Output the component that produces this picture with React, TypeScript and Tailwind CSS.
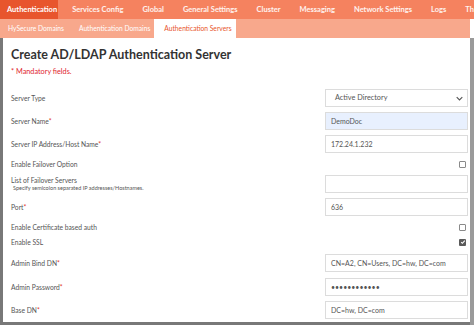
import React from 'react';

const topTabs = ['Services Config', 'Global', 'General Settings', 'Cluster', 'Messaging', 'Network Settings', 'Logs', 'Th'];
const subTabs = ['HySecure Domains', 'Authentication Domains'];

const Req: React.FC = () => <span className="text-[#e2342b]">*</span>;

const TextBox: React.FC<{ value?: string; filled?: boolean }> = ({ value = '', filled }) => (
    <div className={`h-full w-full border border-[#dcdcdc] flex items-center pl-[5px] text-[7px] text-[#555] ${filled ? 'bg-[#e8f0fe]' : 'bg-white'}`}>
        {value}
    </div>
);

const Check: React.FC<{ on?: boolean }> = ({ on }) => (
    <div className="w-full flex justify-end pr-[2px]">
        {on ? (
            <div className="w-[7px] h-[7px] rounded-[1px] bg-[#5a5a5a] flex items-center justify-center">
                <svg width="6" height="6" viewBox="0 0 10 10"><path d="M2 5.2l2 2 4-4.4" stroke="white" strokeWidth="1.8" fill="none" /></svg>
            </div>
        ) : (
            <div className="w-[7px] h-[7px] rounded-[1px] border border-[#8a8a8a] bg-white" />
        )}
    </div>
);

const Row: React.FC<{ label: React.ReactNode; h: string; mt: string; children: React.ReactNode }> = ({ label, h, mt, children }) => (
    <div className={`flex items-center ${h} ${mt}`}>
        <div className="flex-1 text-[6.7px] text-[#555]">{label}</div>
        <div className="w-[143px] h-full flex items-center">{children}</div>
    </div>
);

const App: React.FC = () => {
    return (
        <div className="w-[474px] h-[325px] overflow-hidden bg-white flex flex-col" style={{ fontFamily: 'Lato, "Open Sans", sans-serif' }}>
            <div className="h-[19px] bg-[#f5825f] flex items-center shrink-0">
                <div className="h-full w-[64px] bg-[#e8552d] flex items-center pl-[7px] text-[7.5px] font-bold text-white whitespace-nowrap">
                    Authentication
                </div>
                <div className="flex items-center gap-[19px] pl-[14px] text-[7.5px] font-bold text-white/90 whitespace-nowrap">
                    {topTabs.map((t) => (
                        <span key={t}>{t}</span>
                    ))}
                </div>
            </div>
            <div className="flex-1 flex min-h-0">
                <div className="w-[3px] bg-[#787878] mt-[19px]" />
                <div className="flex-1 flex flex-col min-w-0">
                    <div className="h-[19px] bg-[#f8a88c] flex items-center shrink-0 -ml-[3px] text-[6.7px] whitespace-nowrap">
                        <span className="text-white pl-[8px]">{subTabs[0]}</span>
                        <span className="text-white pl-[15px]">{subTabs[1]}</span>
                        <div className="h-full ml-[4px] w-[82px] bg-white text-[#e8552d] flex items-center pl-[10px]">
                            Authentication Servers
                        </div>
                    </div>
                    <div className="flex-1 pl-[8px] pr-[2px] flex flex-col">
                        <div className="text-[12.5px] font-bold text-[#333] mt-[8px] leading-[17px]">Create AD/LDAP Authentication Server</div>
                        <div className="text-[7.3px] text-[#e0252f] mt-[5px] leading-[8px]">* Mandatory fields.</div>
                        <div className="flex flex-col mt-[13px]">
                            <Row label="Server Type" h="h-[18px]" mt="mt-0">
                                <div className="h-full w-full border border-[#dcdcdc] bg-white flex items-center justify-between pl-[9px] pr-[4px] text-[7.3px] text-[#555]">
                                    Active Directory
                                    <svg width="7" height="5" viewBox="0 0 10 6"><path d="M1 1l4 4 4-4" stroke="#555" strokeWidth="1.6" fill="none" /></svg>
                                </div>
                            </Row>
                            <Row label={<>Server Name<Req /></>} h="h-[18px]" mt="mt-[5px]">
                                <TextBox value="DemoDoc" filled />
                            </Row>
                            <Row label={<>Server IP Address/Host Name<Req /></>} h="h-[18px]" mt="mt-[5px]">
                                <TextBox value="172.24.1.232" />
                            </Row>
                            <Row label="Enable Failover Option" h="h-[14px]" mt="mt-[4px]">
                                <Check />
                            </Row>
                            <Row
                                label={
                                    <div className="leading-[8px]">
                                        <div>List of Failover Servers</div>
                                        <div className="text-[5.5px] pl-[2px]">Specify semicolon separated IP addresses/Hostnames.</div>
                                    </div>
                                }
                                h="h-[18px]"
                                mt="mt-[4px]"
                            >
                                <TextBox />
                            </Row>
                            <Row label={<>Port<Req /></>} h="h-[18px]" mt="mt-[5px]">
                                <TextBox value="636" />
                            </Row>
                            <Row label="Enable Certificate based auth" h="h-[14px]" mt="mt-[4px]">
                                <Check />
                            </Row>
                            <Row label="Enable SSL" h="h-[14px]" mt="mt-[1px]">
                                <Check on />
                            </Row>
                            <Row label={<>Admin Bind DN<Req /></>} h="h-[18px]" mt="mt-[5px]">
                                <TextBox value="CN=A2, CN=Users, DC=hw, DC=com" />
                            </Row>
                            <Row label={<>Admin Password<Req /></>} h="h-[18px]" mt="mt-[6px]">
                                <TextBox value="••••••••••••" />
                            </Row>
                            <Row label={<>Base DN<Req /></>} h="h-[18px]" mt="mt-[5px]">
                                <TextBox value="DC=hw, DC=com" />
                            </Row>
                        </div>
                    </div>
                    <div className="h-[3px] bg-[#787878] -ml-[3px] -mr-[4px] mt-auto shrink-0" />
                </div>
                <div className="w-[4px] bg-[#9a9a9a] mt-[19px]" />
            </div>
        </div>
    );
};

export default App;
